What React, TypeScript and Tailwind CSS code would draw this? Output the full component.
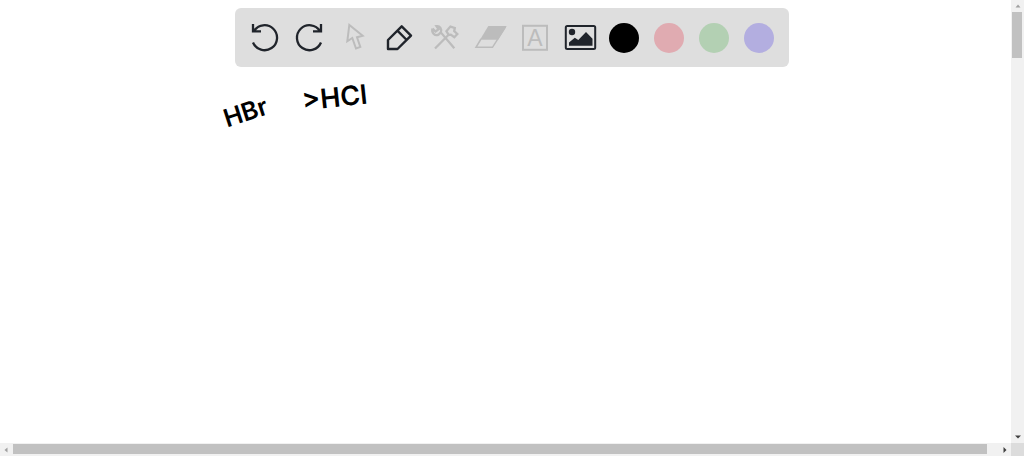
import type { ReactNode } from "react";

const INK = "#20242b";
const MUTED = "#bcbcbc";

function Tool({ label, disabled, children }: { label: string; disabled?: boolean; children: ReactNode }) {
  return (
    <button type="button" aria-label={label} disabled={disabled} className="h-[33px] w-8 shrink-0">
      <svg viewBox="0 0 32 33" className="h-[33px] w-8 overflow-visible" fill="none" stroke={disabled ? MUTED : INK} strokeWidth="2">
        {children}
      </svg>
    </button>
  );
}

function Swatch({ label, color }: { label: string; color: string }) {
  return (
    <button type="button" aria-label={label} className="flex h-[33px] w-8 shrink-0 items-center justify-center">
      <span className={`size-[30px] rounded-full ${color}`} />
    </button>
  );
}

function Toolbar() {
  return (
    <div role="toolbar" aria-label="Drawing tools" className="flex items-center gap-[13px] rounded-md bg-[#dedede] py-[13px] pr-[14px] pl-[13px]">
      <Tool label="Undo">
        <path d="M5 21.5A12.5 12.5 0 1 0 6 10M5 3v7.3h8" strokeWidth="2.3" />
      </Tool>
      <Tool label="Redo">
        <path d="M28 21.5A12.5 12.5 0 1 1 27 10M28 3v7.3h-8" strokeWidth="2.3" />
      </Tool>
      <Tool label="Select" disabled>
        <path d="M11.3 4L9.3 20.3L14.3 17L18 27.5L22.3 26L19 16.3L24.7 14.7Z" />
      </Tool>
      <Tool label="Pen">
        <path d="M5 28V19L18.7 5.3L28 14.6L14.5 28ZM14.4 9.7L23.7 19" strokeWidth="2.4" strokeLinejoin="round" />
      </Tool>
      <Tool label="Tools" disabled>
        <path d="M4.5 7.7L7.6 10.5L10.5 8.2L8.4 5.2C12 4.6 14.2 8 12.8 11.4L26.3 27.3M4.5 7.7C3.2 12 7 15.2 10.6 13.6L12.8 11.4" strokeWidth="2.3" />
        <path d="M7 27.5L20.6 13.8M18.4 10.2L22.4 5.6L26.8 7L26.2 10.2L29.3 13L26.3 16.2L22.8 13.6L20.6 13.8Z" strokeWidth="2.3" />
      </Tool>
      <Tool label="Eraser" disabled>
        <path d="M15.3 5H33.7L25.2 18.7H7Z" fill={MUTED} stroke="none" />
        <path d="M8 18L3 26.3H19.5L32.5 5.8" strokeWidth="1.5" />
      </Tool>
      <Tool label="Text" disabled>
        <rect x="5" y="4.8" width="24" height="24" />
        <text x="17" y="25" textAnchor="middle" fontSize="23" fill={MUTED} stroke="none" className="font-['Liberation_Sans',sans-serif]">A</text>
      </Tool>
      <Tool label="Image">
        <rect x="2.8" y="5" width="29.4" height="23" rx="1.5" />
        <circle cx="9" cy="11" r="3.2" fill={INK} stroke="none" />
        <path d="M6 24.8V21.5L11.8 16.8L15.3 19L23 11L29.5 17.7V24.8Z" fill={INK} stroke="none" />
      </Tool>
      <Swatch label="Black" color="bg-black" />
      <Swatch label="Pink" color="bg-[#e0abb1]" />
      <Swatch label="Green" color="bg-[#b3d0b3]" />
      <Swatch label="Purple" color="bg-[#b3aee0]" />
    </div>
  );
}

function Arrow({ label, path, vertical, color }: { label: string; path: string; vertical?: boolean; color: string }) {
  return (
    <button type="button" aria-label={label} className={vertical ? "flex h-3 w-full items-center justify-center" : "flex h-full w-3 items-center justify-center"}>
      <svg viewBox="0 0 6 6" className="size-[6px]" fill={color}>
        <path d={path} />
      </svg>
    </button>
  );
}

export default function App() {
  return (
    <div className="grid h-screen grid-cols-[1fr_13px] grid-rows-[1fr_13px] overflow-hidden bg-white font-['Inter','Liberation_Sans',sans-serif]">
      <main className="relative flex items-start justify-center overflow-hidden pt-2 pl-[13px]">
        <Toolbar />
        <span className="absolute top-[96px] left-[223px] -rotate-[18deg] text-[25px] leading-8 font-semibold text-black">HBr</span>
        <span className="absolute top-[82px] left-[302px] -rotate-6 text-[27px] leading-8 font-semibold text-black">&gt;HCl</span>
      </main>
      <div className="flex flex-col bg-[#f1f1f1]">
        <Arrow vertical label="Scroll up" path="M0.5 4.5L3 1.5L5.5 4.5Z" color="#a0a0a0" />
        <div className="mr-[2px] ml-px h-[46px] bg-[#c1c1c1]" />
        <div className="grow" />
        <Arrow vertical label="Scroll down" path="M0 1.5L3 4.5L6 1.5Z" color="#404040" />
      </div>
      <div className="flex bg-[#f1f1f1]">
        <Arrow label="Scroll left" path="M4.5 0.5L1.5 3L4.5 5.5Z" color="#a0a0a0" />
        <div className="mt-px mr-3 mb-[2px] ml-px grow bg-[#c1c1c1]" />
        <Arrow label="Scroll right" path="M1.5 0L4.5 3L1.5 6Z" color="#404040" />
      </div>
      <div className="bg-[#dcdcdc]" />
    </div>
  );
}
